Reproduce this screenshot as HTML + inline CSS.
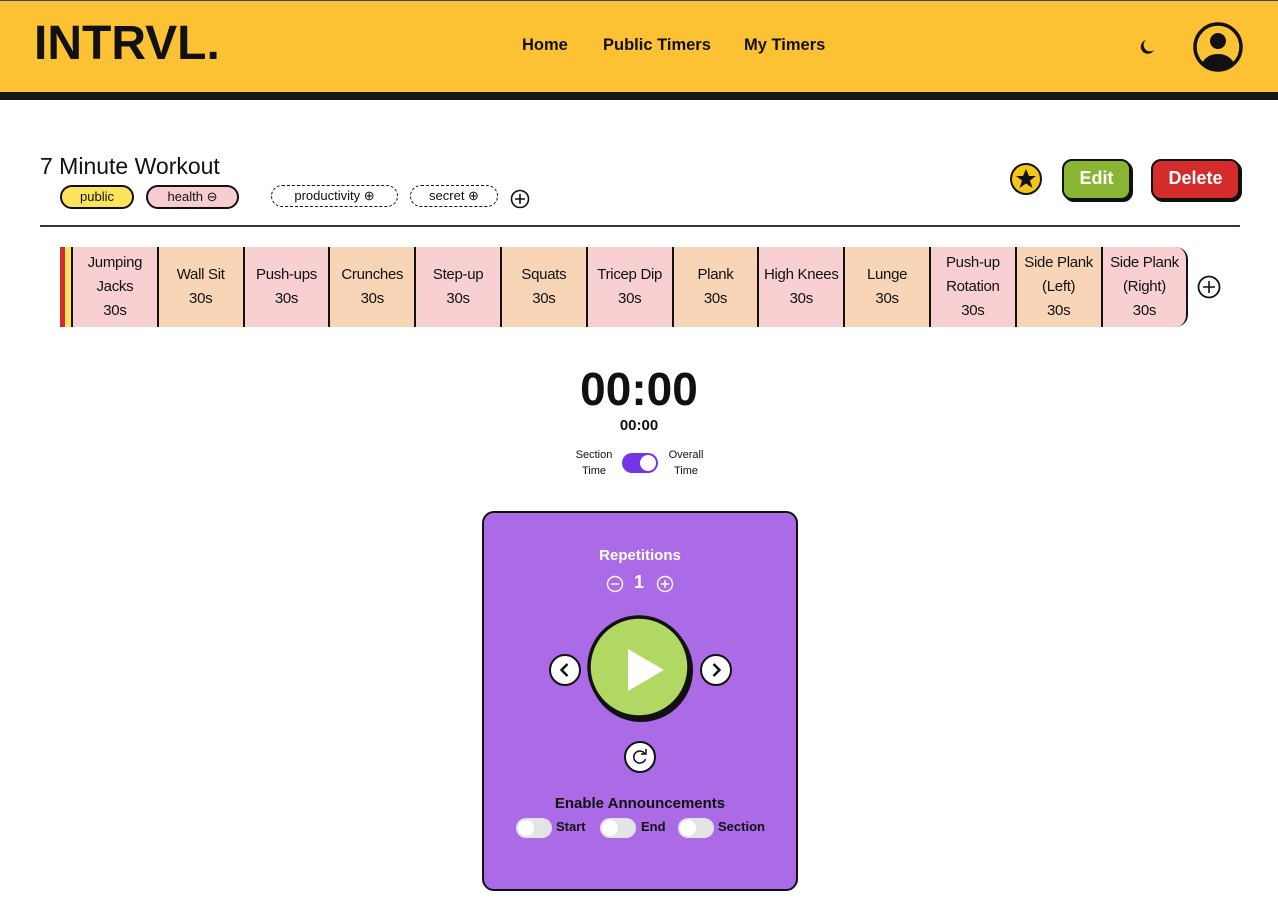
<!DOCTYPE html>
<html><head><style>
*{box-sizing:border-box;margin:0;padding:0}
body{width:1278px;height:918px;background:#fff;font-family:"Liberation Sans",sans-serif;color:#111;position:relative;overflow:hidden}
.abs{position:absolute}
.hdr{left:0;top:0;width:1278px;height:92px;background:#fdc134;border-top:1px solid #3a4a6a}
.bar{left:0;top:92px;width:1278px;height:8px;background:#161616}
.logo{left:34px;top:16px;font-size:48px;font-weight:bold;letter-spacing:0px}
.nav{top:36px;font-size:16.5px;font-weight:bold}
.pill{top:185px;height:24px;border:2px solid #111;border-radius:12px;font-size:13px;text-align:center;line-height:20px}
.seg{top:247px;height:80px;display:flex;font-size:15px}
.c{width:85.8px;border-right:2px solid #111;display:flex;flex-direction:column;justify-content:center;align-items:center;text-align:center;line-height:24px;letter-spacing:-0.3px}
.p{background:#f8d0d2}.o{background:#f8d5b7}
.btn{top:159px;height:41px;border:2px solid #111;border-radius:10px;color:#fff;font-weight:bold;font-size:18px;text-align:center;line-height:35px;box-shadow:2px 2px 0 #111}
.card{left:482px;top:511px;width:316px;height:380px;background:#ab6ae6;border:2px solid #111;border-radius:12px}
.tg{width:36px;height:20px;border-radius:10px;background:#e3e4e8;position:absolute}
.tg:after{content:"";position:absolute;left:2px;top:2px;width:16px;height:16px;border-radius:50%;background:#fff}
.sm{font-size:13px;font-weight:bold;position:absolute}
</style></head><body>
<div class="abs hdr"></div><div class="abs bar"></div>
<div class="abs logo">INTRVL.</div>
<div class="abs nav" style="left:522px">Home</div>
<div class="abs nav" style="left:603px">Public Timers</div>
<div class="abs nav" style="left:744px">My Timers</div>
<svg class="abs" style="left:1136px;top:36px" width="22" height="22" viewBox="0 0 22 22"><path d="M10 4a7 7 0 1 0 8 10a6 6 0 0 1-8-10z" fill="#111"/></svg>
<svg class="abs" style="left:1192px;top:21px" width="52" height="52" viewBox="0 0 52 52"><circle cx="26" cy="26" r="23" fill="none" stroke="#111" stroke-width="3.5"/><circle cx="26" cy="20" r="8" fill="#111"/><path d="M10 42c4-7 10-9 16-9s12 2 16 9c-4 4-10 6-16 6s-12-2-16-6z" fill="#111"/></svg>

<div class="abs" style="left:40px;top:153px;font-size:23px">7 Minute Workout</div>
<div class="abs pill" style="left:60px;width:74px;background:#fce45c">public</div>
<div class="abs pill" style="left:146px;width:93px;background:#f8cdd0">health ⊖</div>
<div class="abs pill" style="left:271px;width:127px;border:1px dashed #111;height:22px;top:185px">productivity ⊕</div>
<div class="abs pill" style="left:410px;width:88px;border:1px dashed #111;height:22px">secret ⊕</div>
<svg class="abs" style="left:510px;top:189px" width="20" height="20"><circle cx="10" cy="10" r="8.5" fill="none" stroke="#111" stroke-width="1.6"/><path d="M10 5v10M5 10h10" stroke="#111" stroke-width="1.6"/></svg>

<svg class="abs" style="left:1009px;top:162px" width="34" height="34"><circle cx="17" cy="17" r="15" fill="#f5c518" stroke="#111" stroke-width="2"/><path d="M17 7l3 7h7l-6 4.5 2.5 7.5-6.5-4.5-6.5 4.5 2.5-7.5-6-4.5h7z" fill="#111"/></svg>
<div class="abs btn" style="left:1062px;width:69px;background:#8ab533">Edit</div>
<div class="abs btn" style="left:1151px;width:89px;background:#d42b2b">Delete</div>
<div class="abs" style="left:40px;top:225px;width:1200px;height:2px;background:#2c3648"></div>

<div class="abs" style="left:60px;top:247px;width:5px;height:80px;background:#d42b2b"></div>
<div class="abs" style="left:65px;top:247px;width:8px;height:80px;background:#fce45c;border-right:2px solid #111"></div>
<div class="abs seg" style="left:73px;border-radius:0 12px 12px 0;overflow:hidden">
<div class="c p">Jumping<br>Jacks<br>30s</div><div class="c o">Wall Sit<br>30s</div><div class="c p">Push-ups<br>30s</div><div class="c o">Crunches<br>30s</div><div class="c p">Step-up<br>30s</div><div class="c o">Squats<br>30s</div><div class="c p">Tricep Dip<br>30s</div><div class="c o">Plank<br>30s</div><div class="c p">High Knees<br>30s</div><div class="c o">Lunge<br>30s</div><div class="c p">Push-up<br>Rotation<br>30s</div><div class="c o">Side Plank<br>(Left)<br>30s</div><div class="c p" style="border-radius:0 12px 12px 0">Side Plank<br>(Right)<br>30s</div>
</div>
<svg class="abs" style="left:1197px;top:275px" width="24" height="24"><circle cx="12" cy="12" r="10.5" fill="none" stroke="#111" stroke-width="1.8"/><path d="M12 6v12M6 12h12" stroke="#111" stroke-width="1.6"/></svg>

<div class="abs" style="left:0;width:1278px;text-align:center;top:362px;font-size:46px;font-weight:bold">00:00</div>
<div class="abs" style="left:0;width:1278px;text-align:center;top:417px;font-size:15px;font-weight:bold">00:00</div>
<div class="abs" style="left:570px;top:447px;width:48px;text-align:center;font-size:11px;line-height:16px">Section<br>Time</div>
<div class="abs" style="left:622px;top:453px;width:36px;height:20px;border-radius:10px;background:#7435e8"><div style="position:absolute;right:2px;top:2px;width:16px;height:16px;border-radius:50%;background:#fff"></div></div>
<div class="abs" style="left:662px;top:447px;width:48px;text-align:center;font-size:11px;line-height:16px">Overall<br>Time</div>

<div class="abs card">
<div style="position:absolute;left:0;width:312px;top:34px;text-align:center;color:#fff;font-weight:bold;font-size:15px">Repetitions</div>
<svg style="position:absolute;left:122px;top:62px" width="18" height="18"><circle cx="9" cy="9" r="7.5" fill="none" stroke="#fff" stroke-width="1.4"/><path d="M5 9h8" stroke="#fff" stroke-width="1.4"/></svg>
<div style="position:absolute;left:150px;top:59px;color:#fff;font-weight:bold;font-size:18px">1</div>
<svg style="position:absolute;left:172px;top:62px" width="18" height="18"><circle cx="9" cy="9" r="7.5" fill="none" stroke="#fff" stroke-width="1.4"/><path d="M5 9h8M9 5v8" stroke="#fff" stroke-width="1.4"/></svg>
<svg style="position:absolute;left:64px;top:140px" width="34" height="34"><circle cx="17" cy="17" r="15" fill="#fff" stroke="#111" stroke-width="2"/><path d="M19.5 11l-6 6 6 6" fill="none" stroke="#111" stroke-width="2.4"/></svg>
<svg style="position:absolute;left:215px;top:140px" width="34" height="34"><circle cx="17" cy="17" r="15" fill="#fff" stroke="#111" stroke-width="2"/><path d="M14.5 11l6 6-6 6" fill="none" stroke="#111" stroke-width="2.4"/></svg>
<svg style="position:absolute;left:103px;top:102px" width="110" height="110"><circle cx="54" cy="55" r="52" fill="#111"/><circle cx="52" cy="52" r="50" fill="#b1d863" stroke="#111" stroke-width="3.5"/><path d="M41 34l36 21-36 21z" fill="#fff"/></svg>
<svg style="position:absolute;left:139px;top:227px" width="34" height="34"><circle cx="17" cy="17" r="15" fill="#fff" stroke="#111" stroke-width="2"/><path d="M22 14a6 6 0 1 0 0.5 5" fill="none" stroke="#111" stroke-width="1.5"/><path d="M23 9v5h-5" fill="none" stroke="#111" stroke-width="1.5"/></svg>
<div style="position:absolute;left:0;width:312px;top:282px;text-align:center;font-weight:bold;font-size:15px">Enable Announcements</div>
<div class="tg" style="left:32px;top:305px"></div><div class="sm" style="left:72px;top:306px">Start</div>
<div class="tg" style="left:116px;top:305px"></div><div class="sm" style="left:157px;top:306px">End</div>
<div class="tg" style="left:194px;top:305px"></div><div class="sm" style="left:234px;top:306px">Section</div>
</div>
</body></html>
